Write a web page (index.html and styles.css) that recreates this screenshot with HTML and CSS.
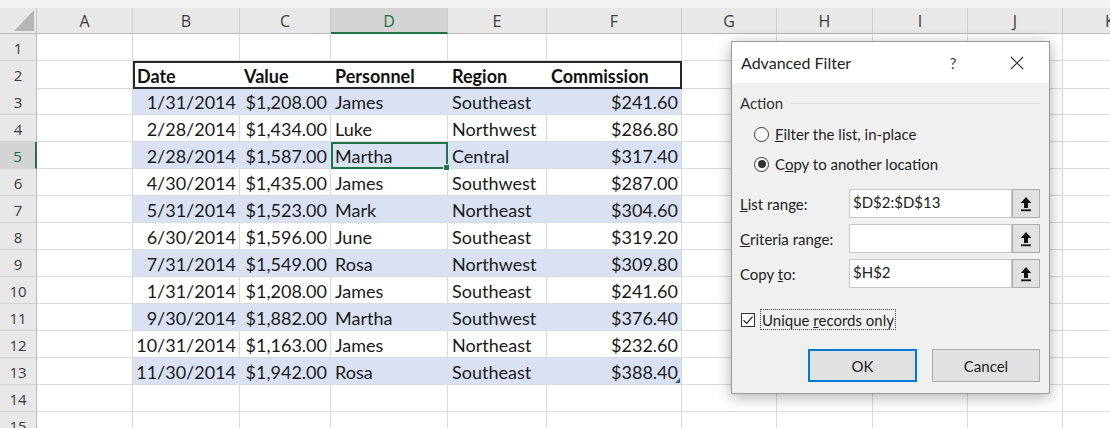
FILE: index.html
```html
<!DOCTYPE html>
<html>
<head>
<meta charset="utf-8">
<link rel="stylesheet" href="styles.css">
</head>
<body>
<div class="app">
  <div class="strip"></div>
  <div class="sheet">
    <div class="row hdr">
      <div class="corner"><svg width="22" height="24" viewBox="0 0 22 24"><polygon points="21,2 21,23 1,23" fill="#b5b5b5"/></svg></div>
      <div class="ch">A</div><div class="ch">B</div><div class="ch">C</div><div class="ch on">D</div><div class="ch">E</div><div class="ch">F</div><div class="ch">G</div><div class="ch">H</div><div class="ch">I</div><div class="ch">J</div><div class="ch">K</div>
    </div>
    <div class="row">
      <div class="rh">1</div><div class="c"></div><div class="c"></div><div class="c"></div><div class="c"></div><div class="c"></div><div class="c"></div><div class="c"></div><div class="c"></div><div class="c"></div><div class="c"></div><div class="c"></div>
    </div>
    <div class="row">
      <div class="rh">2</div><div class="c"></div>
      <div class="thead"><div>Date</div><div>Value</div><div>Personnel</div><div>Region</div><div>Commission</div></div>
      <div class="c"></div><div class="c"></div><div class="c"></div><div class="c"></div><div class="c"></div>
    </div>
    <div class="row fill">
      <div class="rh">3</div><div class="c"></div><div class="c t r">1/31/2014</div><div class="c t r">$1,208.00</div><div class="c t">James</div><div class="c t">Southeast</div><div class="c t r last">$241.60</div><div class="c"></div><div class="c"></div><div class="c"></div><div class="c"></div><div class="c"></div>
    </div>
    <div class="row">
      <div class="rh">4</div><div class="c"></div><div class="c t r">2/28/2014</div><div class="c t r">$1,434.00</div><div class="c t">Luke</div><div class="c t">Northwest</div><div class="c t r last">$286.80</div><div class="c"></div><div class="c"></div><div class="c"></div><div class="c"></div><div class="c"></div>
    </div>
    <div class="row fill">
      <div class="rh on">5</div><div class="c"></div><div class="c t r">2/28/2014</div><div class="c t r">$1,587.00</div><div class="c t sel">Martha</div><div class="c t">Central</div><div class="c t r last">$317.40</div><div class="c"></div><div class="c"></div><div class="c"></div><div class="c"></div><div class="c"></div>
    </div>
    <div class="row">
      <div class="rh">6</div><div class="c"></div><div class="c t r">4/30/2014</div><div class="c t r">$1,435.00</div><div class="c t">James</div><div class="c t">Southwest</div><div class="c t r last">$287.00</div><div class="c"></div><div class="c"></div><div class="c"></div><div class="c"></div><div class="c"></div>
    </div>
    <div class="row fill">
      <div class="rh">7</div><div class="c"></div><div class="c t r">5/31/2014</div><div class="c t r">$1,523.00</div><div class="c t">Mark</div><div class="c t">Northeast</div><div class="c t r last">$304.60</div><div class="c"></div><div class="c"></div><div class="c"></div><div class="c"></div><div class="c"></div>
    </div>
    <div class="row">
      <div class="rh">8</div><div class="c"></div><div class="c t r">6/30/2014</div><div class="c t r">$1,596.00</div><div class="c t">June</div><div class="c t">Southeast</div><div class="c t r last">$319.20</div><div class="c"></div><div class="c"></div><div class="c"></div><div class="c"></div><div class="c"></div>
    </div>
    <div class="row fill">
      <div class="rh">9</div><div class="c"></div><div class="c t r">7/31/2014</div><div class="c t r">$1,549.00</div><div class="c t">Rosa</div><div class="c t">Northwest</div><div class="c t r last">$309.80</div><div class="c"></div><div class="c"></div><div class="c"></div><div class="c"></div><div class="c"></div>
    </div>
    <div class="row">
      <div class="rh">10</div><div class="c"></div><div class="c t r">1/31/2014</div><div class="c t r">$1,208.00</div><div class="c t">James</div><div class="c t">Southeast</div><div class="c t r last">$241.60</div><div class="c"></div><div class="c"></div><div class="c"></div><div class="c"></div><div class="c"></div>
    </div>
    <div class="row fill">
      <div class="rh">11</div><div class="c"></div><div class="c t r">9/30/2014</div><div class="c t r">$1,882.00</div><div class="c t">Martha</div><div class="c t">Southwest</div><div class="c t r last">$376.40</div><div class="c"></div><div class="c"></div><div class="c"></div><div class="c"></div><div class="c"></div>
    </div>
    <div class="row">
      <div class="rh">12</div><div class="c"></div><div class="c t r">10/31/2014</div><div class="c t r">$1,163.00</div><div class="c t">James</div><div class="c t">Northeast</div><div class="c t r last">$232.60</div><div class="c"></div><div class="c"></div><div class="c"></div><div class="c"></div><div class="c"></div>
    </div>
    <div class="row fill">
      <div class="rh">13</div><div class="c"></div><div class="c t r">11/30/2014</div><div class="c t r">$1,942.00</div><div class="c t">Rosa</div><div class="c t">Southeast</div><div class="c t r last end">$388.40</div><div class="c"></div><div class="c"></div><div class="c"></div><div class="c"></div><div class="c"></div>
    </div>
    <div class="row">
      <div class="rh">14</div><div class="c"></div><div class="c"></div><div class="c"></div><div class="c"></div><div class="c"></div><div class="c"></div><div class="c"></div><div class="c"></div><div class="c"></div><div class="c"></div><div class="c"></div>
    </div>
    <div class="row">
      <div class="rh">15</div><div class="c"></div><div class="c"></div><div class="c"></div><div class="c"></div><div class="c"></div><div class="c"></div><div class="c"></div><div class="c"></div><div class="c"></div><div class="c"></div><div class="c"></div>
    </div>
  </div>

  <div class="dialog">
    <div class="titlebar">
      <div class="title">Advanced Filter</div>
      <div class="help">?</div>
      <div class="close"><svg width="14" height="14" viewBox="0 0 14 14"><path d="M1 1 L13 13 M13 1 L1 13" stroke="#333" stroke-width="1.1" fill="none"/></svg></div>
    </div>
    <div class="body">
      <div class="group"><span>Action</span><div class="gline"></div></div>
      <div class="radio"><span class="dot"></span><span><u>F</u>ilter the list, in-place</span></div>
      <div class="radio"><span class="dot checked"></span><span>C<u>o</u>py to another location</span></div>
      <div class="fields">
        <div class="field"><div class="lbl"><span><u>L</u>ist range:</span></div><div class="inp">$D$2:$D$13</div><div class="pick"><svg width="12" height="16" viewBox="0 0 12 16"><polygon points="6,1 11.2,7 8,7 8,12 4,12 4,7 0.8,7" fill="#111"/><rect x="1" y="13.4" width="10" height="1.8" fill="#111"/></svg></div></div>
        <div class="field"><div class="lbl"><span><u>C</u>riteria range:</span></div><div class="inp"></div><div class="pick"><svg width="12" height="16" viewBox="0 0 12 16"><polygon points="6,1 11.2,7 8,7 8,12 4,12 4,7 0.8,7" fill="#111"/><rect x="1" y="13.4" width="10" height="1.8" fill="#111"/></svg></div></div>
        <div class="field"><div class="lbl"><span>Copy <u>t</u>o:</span></div><div class="inp">$H$2</div><div class="pick"><svg width="12" height="16" viewBox="0 0 12 16"><polygon points="6,1 11.2,7 8,7 8,12 4,12 4,7 0.8,7" fill="#111"/><rect x="1" y="13.4" width="10" height="1.8" fill="#111"/></svg></div></div>
      </div>
      <div class="check"><span class="box"><svg width="12" height="12" viewBox="0 0 12 12"><path d="M1.5 6.2 L4.6 9.3 L10.6 2.6" stroke="#222" stroke-width="1.2" fill="none"/></svg></span><span class="focus"><span>Unique <u>r</u>ecords only</span></span></div>
      <div class="buttons"><div class="btn default">OK</div><div class="btn">Cancel</div></div>
    </div>
  </div>
</div>
</body>
</html>
```

FILE: styles.css
```css
html, body {
  margin: 0;
  padding: 0;
  background: #fff;
  overflow: hidden;
}
.app {
  width: 1110px;
  height: 428px;
  overflow: hidden;
  position: relative;
}
.strip {
  height: 8px;
  background: #f3f3f3;
}
.sheet {
  width: 1160px;
}
.row {
  display: grid;
  grid-template-columns: 37px 96px 107px 91px 117px 99px 135px 95px 96px 95px 95px 95px;
  height: 27px;
}
.row.hdr {
  height: 26px;
}
.corner {
  background: #e8e8e8;
  border-right: 1px solid #c4c4c4;
  border-bottom: 1px solid #b9b9b9;
  display: flex;
  align-items: flex-end;
  justify-content: flex-end;
  padding: 0 1px 1px 0;
  box-sizing: border-box;
}
.corner svg { display: block; }
.ch {
  background: #e8e8e8;
  border-right: 1px solid #cdcdcd;
  border-bottom: 1px solid #b9b9b9;
  box-sizing: border-box;
  display: flex;
  align-items: center;
  justify-content: center;
  font-family: "Open Sans", "Noto Sans", sans-serif;
  font-size: 16px;
  color: #3b3b3b;
  padding-top: 1px;
}
.ch.on {
  background: #d4d4d4;
  color: #217346;
  border-bottom: 2px solid #217346;
  padding-top: 2px;
}
.rh {
  background: #e8e8e8;
  border-right: 1px solid #b9b9b9;
  border-bottom: 1px solid #d2d2d2;
  box-sizing: border-box;
  display: flex;
  align-items: center;
  justify-content: center;
  font-family: "Open Sans", "Noto Sans", sans-serif;
  font-size: 15px;
  color: #3b3b3b;
  padding-top: 1px;
}
.rh.on {
  background: #d4d4d4;
  color: #217346;
  border-right: 2px solid #217346;
}
.c {
  border-right: 1px solid #dadada;
  border-bottom: 1px solid #dadada;
  box-sizing: border-box;
  display: flex;
  align-items: center;
  padding: 2px 4px 0 4px;
  font-family: Lato, "Liberation Sans", sans-serif;
  font-size: 18px;
  color: #1a1a1a;
  white-space: nowrap;
}
.c.r {
  justify-content: flex-end;
  padding-right: 3px;
}
.row.fill .t {
  background: #d9e1f2;
  border-right-color: #d9e1f2;
}
.row.fill .t.last {
  border-right-color: #d6d6d6;
}
.thead {
  grid-column: span 5;
  display: grid;
  grid-template-columns: 107px 91px 117px 99px 135px;
  box-shadow: inset 0 0 0 2px #262626;
  height: 28px;
  position: relative;
  z-index: 1;
  background: #fff;
}
.thead div {
  display: flex;
  align-items: center;
  padding: 2px 4px 0 4px;
  font-family: Lato, "Liberation Sans", sans-serif;
  font-weight: 700;
  font-size: 18px;
  color: #111;
}
.sel {
  outline: 2px solid #217346;
  outline-offset: -2px;
  position: relative;
}
.sel::after {
  content: "";
  position: absolute;
  right: -3px;
  bottom: -3px;
  width: 5px;
  height: 5px;
  background: #217346;
  border: 1px solid #fff;
}
.end {
  position: relative;
}
.end::after {
  content: "";
  position: absolute;
  right: 1px;
  bottom: 1px;
  width: 5px;
  height: 5px;
  background: #3c5a9a;
  clip-path: polygon(100% 0, 100% 100%, 0 100%);
}

/* dialog */
.dialog {
  position: absolute;
  left: 731px;
  top: 41px;
  width: 319px;
  box-sizing: border-box;
  border: 1px solid #9a9a9a;
  background: #f0f0f0;
  box-shadow: 0 3px 14px rgba(0, 0, 0, 0.32);
  font-family: Lato, "Noto Sans", sans-serif;
  font-size: 15px;
  color: #1e1e1e;
}
.titlebar {
  height: 41px;
  background: #fff;
  display: flex;
  align-items: center;
  padding: 0 12px 0 9px;
}
.title {
  flex: 1;
  font-size: 16px;
  color: #222;
}
.help {
  width: 40px;
  text-align: center;
  color: #444;
  font-size: 15px;
  padding-left: 2px;
}
.close {
  width: 40px;
  margin-left: 24px;
  display: flex;
  justify-content: center;
}
.close svg { display: block; }
.body {
  padding: 10px 9px 11px 8px;
}
.group {
  height: 20px;
  display: flex;
  align-items: center;
  color: #333;
}
.gline {
  flex: 1;
  border-top: 1px solid #dcdcdc;
  margin-left: 8px;
}
.radio {
  height: 30px;
  display: flex;
  align-items: center;
  padding-left: 14px;
}
.group + .radio {
  margin-top: 6px;
}
.dot {
  width: 15px;
  height: 15px;
  box-sizing: border-box;
  border: 1px solid #333;
  border-radius: 50%;
  background: #fff;
  margin-right: 6px;
  display: flex;
  align-items: center;
  justify-content: center;
}
.dot.checked::before {
  content: "";
  width: 8px;
  height: 8px;
  border-radius: 50%;
  background: #333;
}
.fields {
  margin-top: 10px;
  display: flex;
  flex-direction: column;
  gap: 6px;
}
.field {
  height: 29px;
  display: flex;
  align-items: stretch;
}
.lbl {
  width: 109px;
  display: flex;
  align-items: center;
  color: #222;
}
.inp {
  flex: 1;
  background: #fff;
  border: 1px solid #c6c6c6;
  display: flex;
  align-items: center;
  padding-left: 3px;
  padding-bottom: 3px;
  color: #222;
}
.pick {
  width: 28px;
  box-sizing: border-box;
  background: #e1e1e1;
  border: 1px solid #adadad;
  display: flex;
  align-items: center;
  justify-content: center;
}
.pick svg { display: block; }
.check {
  margin-top: 21px;
  height: 21px;
  display: flex;
  align-items: center;
}
.box {
  width: 14px;
  height: 14px;
  box-sizing: border-box;
  border: 1px solid #333;
  background: #fff;
  display: flex;
  align-items: center;
  justify-content: center;
  margin-left: 1px;
  margin-right: 5px;
}
.box svg { display: block; }
.focus {
  border: 1px dotted #444;
  height: 21px;
  box-sizing: border-box;
  display: flex;
  align-items: center;
  padding: 0 1px;
}
.buttons {
  margin-top: 19px;
  display: flex;
  justify-content: flex-end;
  gap: 15px;
}
.btn {
  width: 108px;
  height: 33px;
  box-sizing: border-box;
  background: #e1e1e1;
  border: 1px solid #adadad;
  display: flex;
  align-items: center;
  justify-content: center;
  color: #222;
}
.btn.default {
  width: 109px;
  border: 2px solid #0078d7;
}
```
